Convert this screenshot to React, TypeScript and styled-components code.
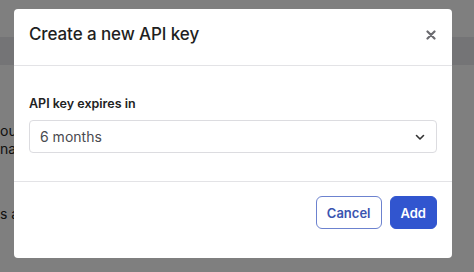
import React from "react";
import styled, { createGlobalStyle } from "styled-components";

const Global = createGlobalStyle`
  html, body { margin: 0; padding: 0; }
  body { width: 474px; height: 272px; overflow: hidden; font-family: Inter, "Noto Sans", sans-serif; }
`;

const Page = styled.div`
  position: relative;
  width: 474px;
  height: 272px;
  background: #fff;
  overflow: hidden;
`;

const PageHeaderGap = styled.div`
  height: 37px;
`;

const PageBar = styled.div`
  height: 28px;
  background: #e8e8ec;
`;

const PageBody = styled.div`
  padding-top: 57px;
  display: flex;
  flex-direction: column;
  font-size: 14px;
  line-height: 18px;
  color: #222;
`;

const PageLine = styled.div<{ $gap?: number }>`
  white-space: nowrap;
  margin-top: ${(p) => p.$gap ?? 0}px;
`;

const Backdrop = styled.div`
  position: absolute;
  inset: 0;
  background: rgba(0, 0, 0, 0.5);
`;

const Modal = styled.div`
  position: absolute;
  left: 14px;
  top: 9px;
  width: 438px;
  height: 249px;
  background: #fff;
  border-radius: 4px;
  display: flex;
  flex-direction: column;
  color: #222;
`;

const Header = styled.div`
  height: 56px;
  padding: 0 15px;
  display: flex;
  align-items: center;
  justify-content: space-between;
  border-bottom: 1px solid #e3e3e6;
`;

const Title = styled.h2`
  margin: 0;
  font-size: 17px;
  font-weight: 500;
  letter-spacing: -0.1px;
  color: #1f1f22;
  padding-bottom: 6px;
`;

const Close = styled.button`
  border: 0;
  background: none;
  padding: 0;
  width: 12px;
  height: 12px;
  display: flex;
  align-items: center;
  justify-content: center;
  margin-bottom: 4px;
  cursor: pointer;
`;

const Body = styled.div`
  height: 116px;
  padding: 30px 15px 0;
  border-bottom: 1px solid #e3e3e6;
  box-sizing: border-box;
  display: flex;
  flex-direction: column;
`;

const Label = styled.label`
  font-size: 12.5px;
  font-weight: 600;
  color: #222;
  line-height: 16px;
  margin-bottom: 8px;
`;

const SelectBox = styled.div`
  height: 33px;
  box-sizing: border-box;
  border: 1px solid #dcdce0;
  border-radius: 4px;
  padding: 0 10px 0 10px;
  display: flex;
  align-items: center;
  justify-content: space-between;
  font-size: 14px;
  color: #4a4a4f;
`;

const Footer = styled.div`
  padding: 14px 15px 0;
  display: flex;
  justify-content: flex-end;
  gap: 8px;
`;

const Button = styled.button<{ $primary?: boolean }>`
  height: 33px;
  box-sizing: border-box;
  padding: 0 10px;
  border-radius: 6px;
  font-family: Inter, "Noto Sans", sans-serif;
  font-size: 13px;
  font-weight: 600;
  border: 1px solid ${(p) => (p.$primary ? "#3155cf" : "#6c82cf")};
  background: ${(p) => (p.$primary ? "#3155cf" : "#fff")};
  color: ${(p) => (p.$primary ? "#fff" : "#3a54b0")};
`;

export default function App() {
  return (
    <>
      <Global />
      <Page>
        <PageHeaderGap />
        <PageBar />
        <PageBody>
          <PageLine>ou</PageLine>
          <PageLine>nai</PageLine>
          <PageLine $gap={47}>s a</PageLine>
        </PageBody>
        <Backdrop />
        <Modal>
          <Header>
            <Title>Create a new API key</Title>
            <Close aria-label="Close">
              <svg width="10" height="10" viewBox="0 0 10 10">
                <path d="M1.5 1.5 L8.5 8.5 M8.5 1.5 L1.5 8.5" stroke="#6b6b70" strokeWidth="2.2" strokeLinecap="round" />
              </svg>
            </Close>
          </Header>
          <Body>
            <Label>API key expires in</Label>
            <SelectBox>
              <span>6 months</span>
              <svg width="12" height="12" viewBox="0 0 12 12">
                <path d="M2.5 4.5 L6 8 L9.5 4.5" stroke="#333" strokeWidth="1.6" fill="none" strokeLinecap="round" strokeLinejoin="round" />
              </svg>
            </SelectBox>
          </Body>
          <Footer>
            <Button>Cancel</Button>
            <Button $primary>Add</Button>
          </Footer>
        </Modal>
      </Page>
    </>
  );
}
